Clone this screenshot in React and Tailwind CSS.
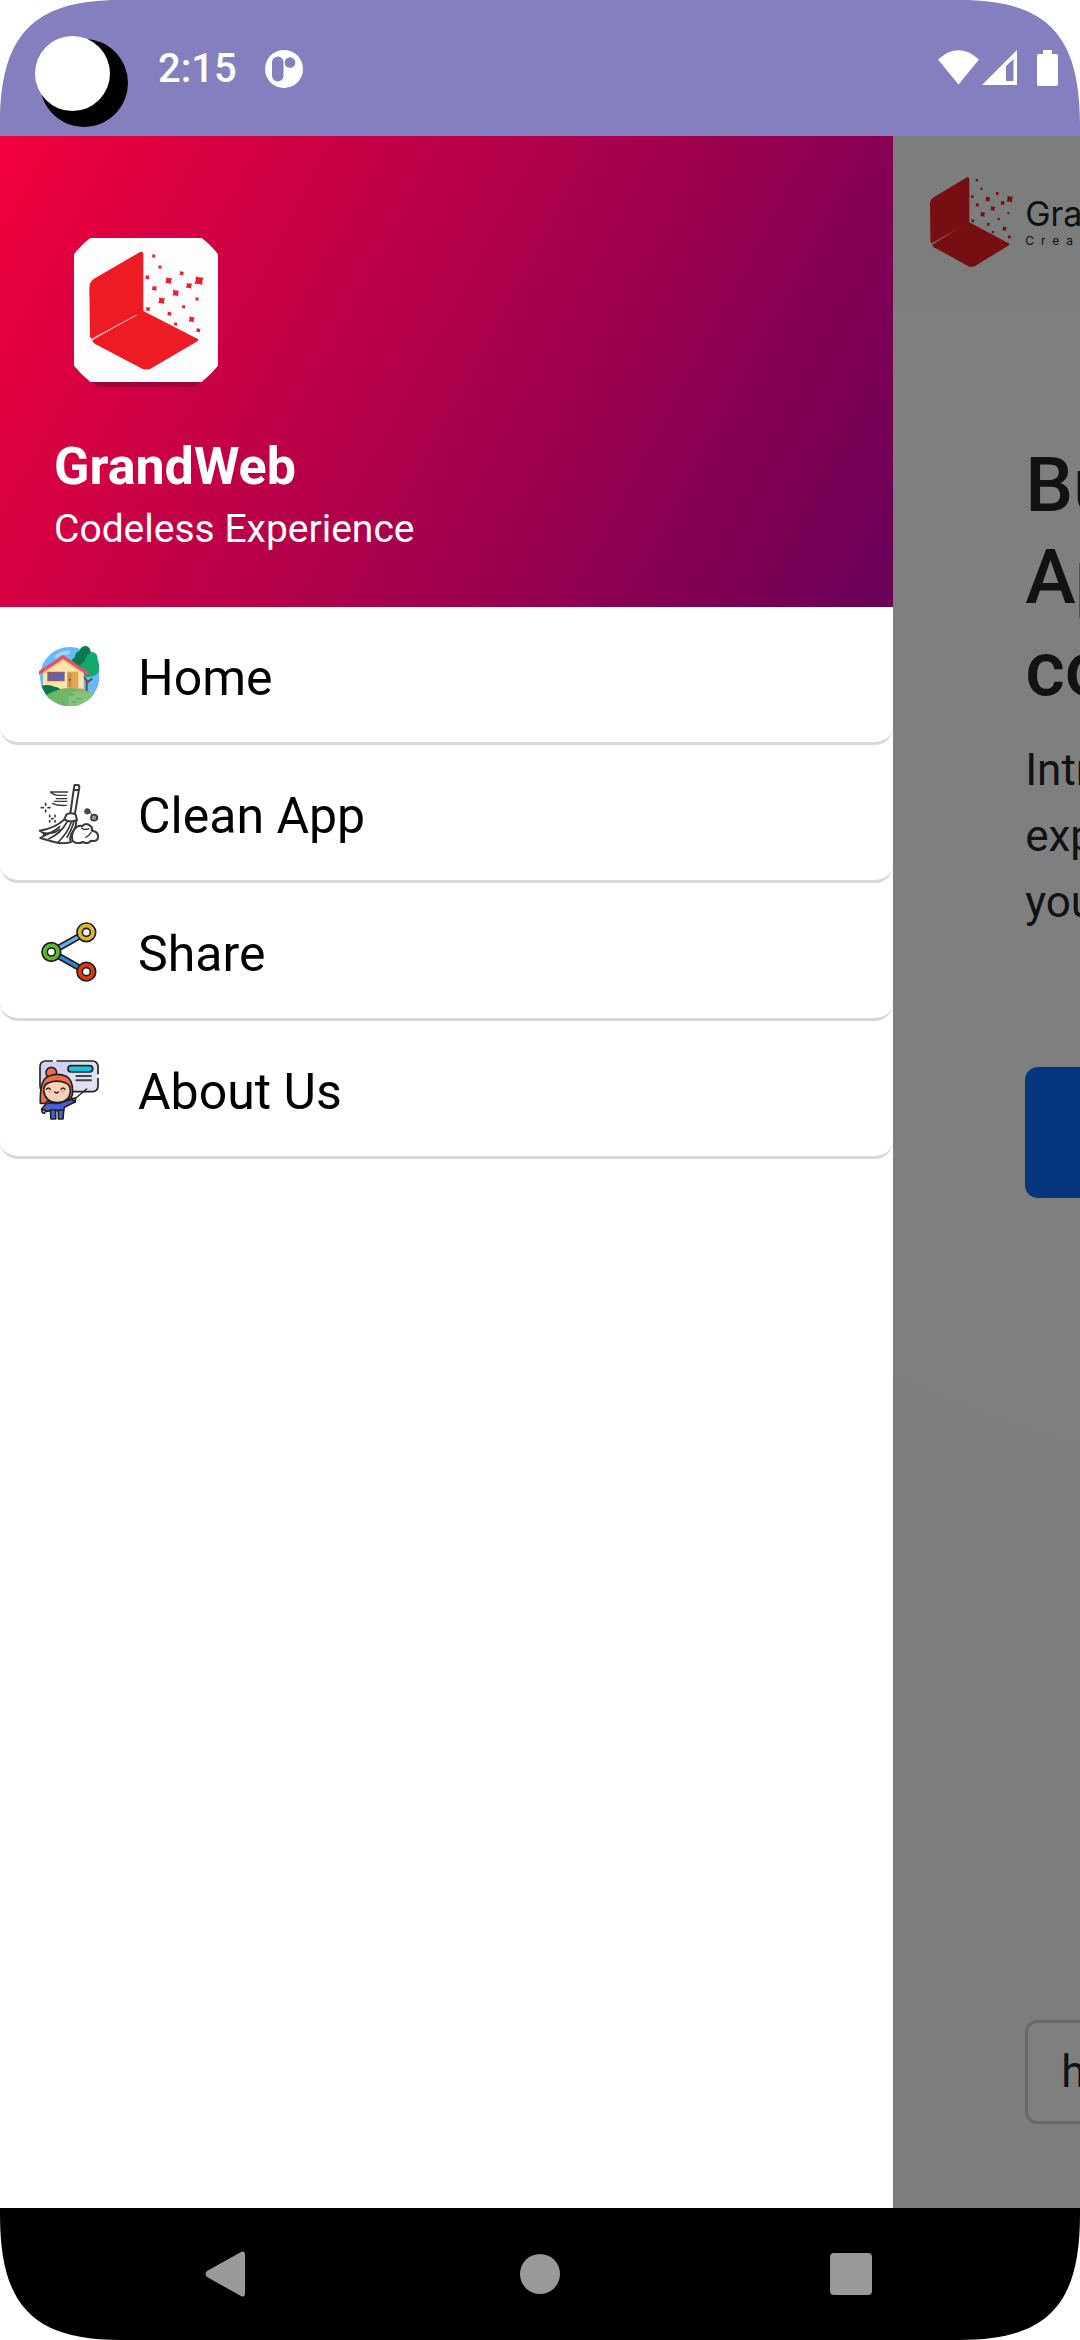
const LOGO_DOTS = [
  [341, 108, 5], [360, 141, 5], [322, 172, 6], [343, 205, 7], [386, 182, 9],
  [425, 160, 6], [477, 182, 12], [447, 197, 8], [407, 219, 9], [365, 242, 9],
  [471, 237, 5], [431, 260, 5], [324, 267, 6], [388, 281, 6], [407, 312, 5],
  [455, 298, 8], [475, 331, 6],
];

function LogoMark({ color }) {
  return (
    <g fill={color}>
      <path d="M300 96 Q309 94 310 101 L310 275 L158 357 Q151 356 150 350 L148 205 Q148 185 162 176 Z" />
      <path d="M310 273 L472 356 Q478 360 472 364 L334 445 Q319 452 304 445 L164 371 Q158 367 157 361 L290 283 Z" />
      {LOGO_DOTS.map(([x, y, s]) => (
        <path
          key={`${x}-${y}`}
          transform={`translate(${x} ${y}) rotate(8) scale(${s})`}
          d="M-1 -1 Q0 -.6 1 -1 Q.6 0 1 1 Q0 .6 -1 1 Q-.6 0 -1 -1 Z"
        />
      ))}
    </g>
  );
}

function AppIcon() {
  return (
    <svg viewBox="102 54 432 450" className="w-36 h-[150px]" aria-hidden="true">
      <path d="M150 484 H486 L462 500 H176 Z" fill="#7d0035" opacity=".6" />
      <path d="M151 54 H485 Q512 74 534 103 V437 Q512 464 485 486 H151 Q124 464 102 437 V103 Q124 74 151 54 Z" fill="#fdfdfd" />
      <LogoMark color="#ed1c24" />
      <path d="M154 360 L290 285 L160 354 Z" fill="#ffb3b3" stroke="#ffb3b3" strokeWidth="2" />
    </svg>
  );
}

function HomeIcon() {
  return (
    <svg viewBox="0 0 180 180" className="w-[60px] h-[60px]" aria-hidden="true">
      <defs>
        <clipPath id="home-circle">
          <circle cx="92" cy="92" r="89" />
        </clipPath>
      </defs>
      <circle cx="92" cy="92" r="89" fill="#66b9fb" />
      <path d="M45 32 Q65 12 95 14 L88 26 Q65 24 52 38 Z" fill="#a8d8fd" />
      <path d="M100 60 Q92 42 108 34 Q108 18 122 14 Q126 0 140 0 Q152 2 154 14 Q168 30 150 60 L120 72 Z" fill="#0a7a4e" />
      <path d="M122 74 Q120 52 138 46 Q142 22 160 18 Q176 20 176 40 Q186 70 174 84 Q160 96 140 92 Z" fill="#12a86e" />
      <path d="M143 138 V104 L134 92 M144 110 L160 98" stroke="#6d4a4e" strokeWidth="6" fill="none" />
      <path d="M12 76 L72 36 L134 78 V130 H12 Z" fill="#fbe5aa" />
      <path d="M12 76 L72 36 L134 78 V86 L72 48 L12 86 Z" fill="#f6d48d" />
      <path d="M2 80 L72 33 L143 80" fill="none" stroke="#ea5069" strokeWidth="10" strokeLinecap="square" />
      <rect x="25" y="77" width="52" height="29" rx="2" fill="#94605f" />
      <path d="M29 81 H38 V102 H29 Z M43 81 H58 V102 H43 Z M63 81 H73 V102 H63 Z" fill="#5560d4" />
      <rect x="84" y="77" width="34" height="50" fill="#e3a555" />
      <rect x="88" y="81" width="9" height="42" fill="#c98c45" />
      <circle cx="93" cy="101" r="3" fill="#6d4a2e" />
      <path d="M70 126 H134 V134 H70 Z" fill="#efc069" />
      <g clipPath="url(#home-circle)">
        <path d="M0 122 Q30 112 46 122 Q64 122 70 140 L30 160 L0 140 Z" fill="#0a7a4e" />
        <path d="M18 150 Q90 104 172 146 V180 H18 Z" fill="#70b669" />
        <path d="M90 180 Q80 140 120 134 Q150 136 172 146 V180 Z" fill="#85c37c" />
        <path d="M92 146 H106 M112 158 H130 M100 168 H112" stroke="#5fa45b" strokeWidth="4" />
      </g>
    </svg>
  );
}

function BroomIcon() {
  return (
    <svg viewBox="0 0 180 180" className="w-[60px] h-[60px]" fill="none" stroke="#3a3a3a" strokeWidth="6" strokeLinecap="round" strokeLinejoin="round" aria-hidden="true">
      <path d="M106 4 Q112 0 120 4 Q122 8 120 16 L108 88 M106 4 L94 88 M106 18 H119" />
      <path d="M34 24 H86 M34 24 Q44 34 60 34 H82 M46 52 H84 M40 58 Q56 66 82 64 M52 44 H84" strokeWidth="4" />
      <path d="M82 92 Q94 84 110 92 L114 108 Q94 118 76 106 Z" fill="#fff" />
      <path d="M76 106 Q50 132 2 140 Q14 150 30 148 Q10 158 4 162 Q30 170 46 174 Q72 182 96 174 Q88 158 106 136 Q112 124 112 110" />
      <path d="M84 114 Q66 148 30 164 M96 116 Q86 146 58 174 M104 116 Q98 136 84 160 M62 128 Q40 148 14 152 M36 148 Q50 146 62 136" strokeWidth="5" />
      <path d="M106 136 Q116 122 130 126 Q142 114 154 126 Q162 130 158 140 Q178 142 178 160 Q174 174 156 170 Q148 182 132 174 Q114 182 102 172 Q94 156 106 136 Z" fill="#fff" />
      <path d="M128 132 Q136 140 150 134 M140 160 Q150 156 156 146" strokeWidth="4" />
      <path d="M20 58 V64 M20 78 V84 M7 71 H13 M27 71 H33" strokeWidth="5" />
      <path d="M32 94 V98 M48 94 V98 M32 110 V114 M48 110 V114 M38 104 H42" strokeWidth="5" />
      <circle cx="145" cy="82" r="8" fill="#4a4a4a" strokeWidth="3" />
      <circle cx="165" cy="101" r="9" fill="#999" strokeWidth="5" />
      <path d="M152 84 L158 90 M176 96 V106" strokeWidth="3" />
    </svg>
  );
}

function ShareIcon() {
  const nodes = [
    { x: 142, y: 31, ring: "#dcb92c" },
    { x: 37, y: 90, ring: "#5fb82a" },
    { x: 142, y: 149, ring: "#e0380f" },
  ];
  return (
    <svg viewBox="0 0 180 180" className="w-[60px] h-[60px]" aria-hidden="true">
      <path d="M142 31 L37 90 L142 149" fill="none" stroke="#1d1d1d" strokeWidth="20" />
      <path d="M142 31 L37 90" stroke="#68aee8" strokeWidth="10" />
      <path d="M37 90 L142 149" stroke="#2f86cf" strokeWidth="10" />
      {nodes.map((n) => (
        <g key={n.ring} stroke="#1d1d1d" strokeWidth="5">
          <circle cx={n.x} cy={n.y} r="28" fill={n.ring} />
          <circle cx={n.x} cy={n.y} r="12" fill="#fff" />
        </g>
      ))}
    </svg>
  );
}

function AboutIcon() {
  return (
    <svg viewBox="0 0 180 180" className="w-[60px] h-[60px]" stroke="#222" strokeWidth="5" strokeLinecap="round" strokeLinejoin="round" aria-hidden="true">
      <rect x="3" y="3" width="174" height="92" rx="16" fill="#e0e0f4" />
      <path d="M16 6 H100 L74 92 H6 V20 Z" fill="#d3cff0" stroke="none" />
      <path d="M44 3 H50 M177 46 V52" stroke="#fff" strokeWidth="6" />
      <rect x="87" y="17" width="74" height="19" rx="9" fill="#0cc8e4" />
      <path d="M112 48 H156 M112 61 H156" strokeWidth="6" stroke="#444" />
      <path d="M106 118 L143 87" strokeWidth="4" />
      <circle cx="37" cy="38" r="16" fill="#ee6f45" />
      <path d="M4 130 Q2 60 26 50 Q54 36 84 50 Q104 62 100 106 L92 118 L24 124 Q22 132 8 130 Z" fill="#ee6f45" />
      <path d="M14 92 Q14 72 30 68 Q56 58 82 70 Q94 76 94 94 Q92 126 54 128 Q18 126 14 92 Z" fill="#fbd0bb" />
      <path d="M22 88 Q28 80 34 88 M66 88 Q72 80 78 88" fill="none" strokeWidth="4" />
      <path d="M47 96 Q53 102 58 96" fill="none" strokeWidth="4" />
      <path d="M28 94 H36 M66 94 H76" stroke="#f5a898" />
      <path d="M34 128 Q54 134 72 126 L98 118 L108 126 L76 142 L74 152 H34 L22 154 L8 148 L20 132 Z" fill="#4a5fd8" />
      <path d="M34 150 H50 V177 H36 Z M58 150 H74 L72 177 H58 Z" fill="#4a5fd8" />
      <path d="M8 148 L20 152 L16 160 L10 158 Z M98 116 L110 114 L108 126 Z" fill="#fbd0bb" />
    </svg>
  );
}

const MENU = [
  { label: "Home", Icon: HomeIcon },
  { label: "Clean App", Icon: BroomIcon },
  { label: "Share", Icon: ShareIcon },
  { label: "About Us", Icon: AboutIcon },
];

function StatusBar() {
  return (
    <header className="h-[136px] shrink-0 bg-[#8480c0] flex items-start justify-between pl-[35px] pr-[22px]">
      <div className="flex items-start">
        {/* camera cut-out */}
        <svg viewBox="0 0 94 92" className="w-[94px] h-[92px] mt-9" aria-hidden="true">
          <circle cx="49" cy="47" r="44" fill="#000" />
          <circle cx="37.5" cy="37.5" r="37.5" fill="#fff" />
        </svg>
        <div className="flex items-center gap-7 pl-[29px] mt-[46px]">
          <span className="text-[40px] leading-[46px] font-medium text-white">2:15</span>
          <svg viewBox="0 0 38 38" className="w-[38px] h-[38px]" aria-hidden="true">
            <circle cx="19" cy="19" r="19" fill="#fff" />
            <rect x="7" y="6.500" width="11.500" height="25" rx="5.700" fill="#8480c0" />
            <circle cx="25" cy="12.500" r="5.300" fill="#8480c0" />
          </svg>
        </div>
      </div>
      <div className="flex items-start mt-[50px]">
        <svg viewBox="0 0 41 35" className="w-[41px] h-[35px]" aria-hidden="true">
          <path d="M0 9.500 Q20.500 -9 41 9.500 L20.500 34.500 Z" fill="#fff" />
        </svg>
        <svg viewBox="0 0 35 35" className="w-[35px] h-[35px] ml-[3px]" aria-hidden="true">
          <path fillRule="evenodd" d="M35 0 V35 H0 Z M24 16 V31 H31.500 V9 Z" fill="#fff" />
        </svg>
        <svg viewBox="0 0 21 36" className="w-[21px] h-9 ml-5" aria-hidden="true">
          <path d="M6 0 H15 V4 H19 Q21 4 21 6 V34 Q21 36 19 36 H2 Q0 36 0 34 V6 Q0 4 2 4 H6 Z" fill="#fff" />
        </svg>
      </div>
    </header>
  );
}

function Drawer() {
  return (
    <aside className="w-[82.7%] shrink-0 bg-white">
      <div className="h-[471px] flex flex-col items-start pt-[102px] pl-[54px] text-white bg-[linear-gradient(118deg,#f2003c,#690059)]">
        <div className="pl-5">
          <AppIcon />
        </div>
        <h2 className="mt-[47px] text-[52px] leading-[64px] font-bold">GrandWeb</h2>
        <p className="text-[39px] leading-[60px]">Codeless Experience</p>
      </div>
      <nav>
        {MENU.map(({ label, Icon }) => (
          <a
            key={label}
            href="#"
            className="flex items-center gap-[39px] h-[138px] pt-[3px] pl-[39px] bg-white border-b-[3px] border-[#d8d8d8] rounded-[18px]"
          >
            <Icon />
            <span className="pt-[3px] text-[50px] leading-[60px] text-black">{label}</span>
          </a>
        ))}
      </nav>
    </aside>
  );
}

function WebPage() {
  return (
    <main className="relative flex-1 min-w-0 overflow-hidden bg-white text-[#212529] whitespace-nowrap">
      {/* curved backdrop of the hero */}
      <svg viewBox="0 0 187 835" preserveAspectRatio="none" className="absolute inset-x-0 bottom-0 w-full h-[835px]" aria-hidden="true">
        <path d="M0 0 Q90 46 187 74 V835 H0 Z" fill="#f8fcfa" />
      </svg>
      <div className="relative h-[171px] bg-[#f8fcfa] flex items-start pl-[37px] pt-[41px]">
        <svg viewBox="148 95 342 354" preserveAspectRatio="none" className="w-[83px] h-[90px] shrink-0" aria-hidden="true">
          <LogoMark color="#ed1c24" />
          <path d="M154 360 L290 283 L160 354 Z" fill="#fff" />
        </svg>
        <div className="pl-3 pt-[17px]">
          <p className="text-[34px] leading-[40px] font-[Inter]">GrandWeb</p>
          <p className="text-[12px] leading-[14px] tracking-[7px] font-[Inter]">Creativity</p>
        </div>
      </div>
      <div className="relative pl-[132px] pt-[132px]">
        <h1 className="text-[76px] leading-[92px] font-medium">
          Build<br />Apps<br />code
        </h1>
        <p className="mt-[22px] text-[44px] leading-[66px]">
          Introducing<br />experience<br />your
        </p>
        <button type="button" aria-label="Get started" className="block mt-[132px] w-[400px] h-[131px] rounded-[13px] bg-[#0d6efd]" />
        <input
          type="text"
          aria-label="Website address"
          defaultValue="https://"
          className="block mt-[822px] w-[500px] h-[104px] pl-[33px] text-[44px] leading-[66px] bg-white border-[3px] border-[#ced4da] rounded-[12px]"
        />
      </div>
      <div className="absolute inset-0 bg-black/50" />
    </main>
  );
}

function NavBar() {
  return (
    <footer className="h-[132px] shrink-0 bg-black px-[125px]">
      <div className="grid grid-cols-[208px_1fr_208px] h-full items-center">
        <button type="button" aria-label="Back" className="flex justify-center pr-2">
          <svg viewBox="0 0 40 46" className="w-10 h-[46px]" aria-hidden="true">
            <path d="M36 1 Q40 -1 40 4 V42 Q40 47 36 45 L2 26 Q-1 23 2 20 Z" fill="#999" />
          </svg>
        </button>
        <button type="button" aria-label="Home screen" className="flex justify-center">
          <span className="w-10 h-10 rounded-full bg-[#999]" />
        </button>
        <button type="button" aria-label="Recent apps" className="flex justify-center">
          <span className="w-[42px] h-[42px] rounded-[4px] bg-[#999]" />
        </button>
      </div>
    </footer>
  );
}

function Corner({ className }) {
  return (
    <svg viewBox="0 0 120 125" className={`absolute w-[120px] h-[125px] ${className}`} aria-hidden="true">
      <path d="M0 0 V125 C0 36 32 0 120 0 Z" fill="#fff" />
    </svg>
  );
}

export default function App() {
  return (
    <div className="relative min-h-screen flex flex-col overflow-hidden bg-white font-[Roboto,sans-serif]">
      <StatusBar />
      <div className="flex flex-1">
        <Drawer />
        <WebPage />
      </div>
      <NavBar />
      {/* rounded screen corners */}
      <Corner className="top-0 left-0" />
      <Corner className="top-0 right-0 -scale-x-100" />
      <Corner className="bottom-0 left-0 -scale-y-100" />
      <Corner className="bottom-0 right-0 -scale-100" />
    </div>
  );
}
